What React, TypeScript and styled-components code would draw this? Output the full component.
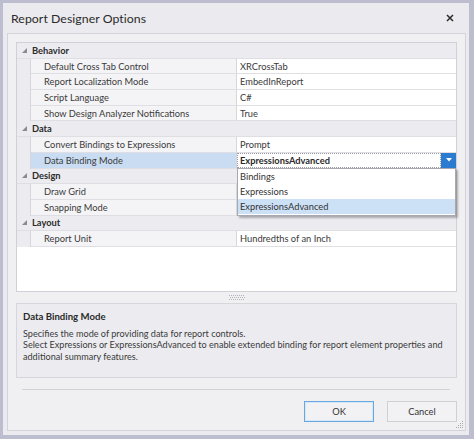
import React from "react";
import styled, { createGlobalStyle } from "styled-components";

const GlobalStyle = createGlobalStyle`
  html, body { margin: 0; padding: 0; background: #bdbdd0; }
  body { font-family: Lato, "Open Sans", sans-serif; color: #333; }
  * { box-sizing: border-box; }
`;

const FONT = `Lato, "Open Sans", sans-serif`;
const ROW_H = 15.7;

const Screen = styled.div`
  width: 474px;
  height: 439px;
  padding: 3px 5px 4px 3px;
  background: #bdbdd0;
  display: flex;
`;

const Window = styled.div`
  flex: 1;
  display: flex;
  flex-direction: column;
  background: #ebebef;
  padding: 0 3px 4px 4px;
`;

const TitleBar = styled.div`
  height: 30px;
  display: flex;
  align-items: center;
  justify-content: space-between;
  padding: 0 12px 0 4px;
`;

const Title = styled.div`
  font-family: ${FONT};
  font-size: 12.3px;
  color: #2a2a2a;
  letter-spacing: 0.05px;
`;

const Client = styled.div`
  position: relative;
  flex: 1;
  display: flex;
  flex-direction: column;
  border: 1px solid #d3d3d9;
  background: #f0f0f3;
  padding: 8px 8px 8px 8px;
`;

const Grid = styled.div`
  height: 250px;
  border: 1px solid #d0d0d7;
  background: #ffffff;
  display: flex;
  flex-direction: column;
`;

const CategoryRow = styled.div`
  height: ${ROW_H}px;
  display: grid;
  grid-template-columns: 14px 1fr;
  align-items: center;
  background: #ebebf0;
  border-bottom: 1px solid #dedee3;
`;

const Expander = styled.div`
  display: flex;
  justify-content: flex-end;
  padding-right: 4px;
`;

const CategoryText = styled.div`
  font-family: ${FONT};
  font-weight: 700;
  font-size: 9.3px;
  color: #2b2b2b;
  padding-left: 1px;
`;

const PropRow = styled.div`
  height: ${ROW_H}px;
  display: grid;
  grid-template-columns: 14px 206px 1fr;
`;

const Gutter = styled.div`
  background: #ebebf0;
  border-right: 1px solid #d6d6dc;
`;

const NameCell = styled.div<{ $selected?: boolean }>`
  display: flex;
  align-items: center;
  padding-left: 13px;
  font-family: ${FONT};
  font-size: 9.3px;
  color: #3a3a3a;
  background: ${(p) => (p.$selected ? "#c9dcf2" : "#f4f4f6")};
  border-right: 1px solid #d6d6dc;
  border-bottom: 1px solid #dedee3;
  white-space: nowrap;
`;

const ValueCell = styled.div`
  position: relative;
  display: flex;
  align-items: center;
  padding-left: 3px;
  font-family: ${FONT};
  font-size: 9.3px;
  color: #3a3a3a;
  background: #ffffff;
  border-bottom: 1px solid #dedee3;
  white-space: nowrap;
`;

const EditorCell = styled.div`
  position: relative;
  display: flex;
  align-items: stretch;
  background: #ffffff;
  border-bottom: 1px solid #dedee3;
`;

const EditorText = styled.div`
  flex: 1;
  display: flex;
  align-items: center;
  padding-left: 2px;
  border: 1px dotted #9a9aa4;
  font-family: ${FONT};
  font-weight: 700;
  font-size: 9.3px;
  color: #2a2a2a;
`;

const DropButton = styled.div`
  width: 15px;
  background: #2b7bd0;
  display: flex;
  align-items: center;
  justify-content: center;
`;

const Popup = styled.div`
  position: absolute;
  top: 100%;
  left: 0;
  right: 0;
  height: 48px;
  background: #ffffff;
  border: 1px solid #a8a8b0;
  box-shadow: 2px 2px 2px rgba(0, 0, 0, 0.28);
  display: flex;
  flex-direction: column;
  z-index: 5;
`;

const PopupItem = styled.div<{ $active?: boolean }>`
  flex: 1;
  display: flex;
  align-items: center;
  padding-left: 2px;
  font-family: ${FONT};
  font-size: 9.3px;
  color: #333;
  background: ${(p) => (p.$active ? "#cce0f6" : "transparent")};
`;

const Splitter = styled.div`
  height: 11px;
  display: flex;
  align-items: center;
  justify-content: center;
`;

const Description = styled.div`
  height: 75px;
  border: 1px solid #d6d6dc;
  background: #ececf0;
  padding: 6px 6px;
  display: flex;
  flex-direction: column;
`;

const DescTitle = styled.div`
  font-family: ${FONT};
  font-weight: 700;
  font-size: 9.6px;
  color: #2a2a2a;
  line-height: 13px;
  margin-bottom: 5px;
`;

const DescText = styled.div`
  font-family: ${FONT};
  font-size: 9.1px;
  line-height: 11.3px;
  color: #3a3a3a;
  white-space: nowrap;
`;

const Separator = styled.div`
  height: 1px;
  background: #d2d2d8;
  margin: 11px 7px 11px 6px;
`;

const ButtonRow = styled.div`
  display: flex;
  justify-content: flex-end;
  gap: 13px;
`;

const Button = styled.div<{ $focused?: boolean }>`
  width: 70px;
  height: 21px;
  display: flex;
  align-items: center;
  justify-content: center;
  font-family: ${FONT};
  font-size: 9.3px;
  color: #333;
  background: #f2f2f5;
  border: 1px solid ${(p) => (p.$focused ? "#6aa7df" : "#cfcfd5")};
  box-shadow: ${(p) => (p.$focused ? "inset 0 0 0 1px #d6e7f7" : "none")};
`;

const Grip = styled.svg`
  position: absolute;
  right: 1px;
  bottom: 1px;
`;

const Expand = () => (
  <svg width="5" height="5" viewBox="0 0 5 5">
    <polygon points="5,0 5,5 0,5" fill="#8a8a92" />
  </svg>
);

type Prop = { name: string; value: string; editor?: boolean };
type Cat = { title: string; props: Prop[] };

const data: Cat[] = [
  {
    title: "Behavior",
    props: [
      { name: "Default Cross Tab Control", value: "XRCrossTab" },
      { name: "Report Localization Mode", value: "EmbedInReport" },
      { name: "Script Language", value: "C#" },
      { name: "Show Design Analyzer Notifications", value: "True" },
    ],
  },
  {
    title: "Data",
    props: [
      { name: "Convert Bindings to Expressions", value: "Prompt" },
      { name: "Data Binding Mode", value: "ExpressionsAdvanced", editor: true },
    ],
  },
  {
    title: "Design",
    props: [
      { name: "Draw Grid", value: "" },
      { name: "Snapping Mode", value: "" },
    ],
  },
  {
    title: "Layout",
    props: [{ name: "Report Unit", value: "Hundredths of an Inch" }],
  },
];

export default function App() {
  return (
    <>
      <GlobalStyle />
      <Screen>
        <Window>
          <TitleBar>
            <Title>Report Designer Options</Title>
            <svg width="8" height="8" viewBox="0 0 8 8">
              <path d="M1 1 L7 7 M7 1 L1 7" stroke="#2a2a2a" strokeWidth="1.5" />
            </svg>
          </TitleBar>
          <Client>
            <Grid>
              {data.map((cat) => (
                <React.Fragment key={cat.title}>
                  <CategoryRow>
                    <Expander>
                      <Expand />
                    </Expander>
                    <CategoryText>{cat.title}</CategoryText>
                  </CategoryRow>
                  {cat.props.map((p) => (
                    <PropRow key={p.name}>
                      <Gutter />
                      <NameCell $selected={p.editor}>{p.name}</NameCell>
                      {p.editor ? (
                        <EditorCell>
                          <EditorText>{p.value}</EditorText>
                          <DropButton>
                            <svg width="6" height="4" viewBox="0 0 6 4">
                              <polygon points="0,0 6,0 3,3.5" fill="#ffffff" />
                            </svg>
                          </DropButton>
                          <Popup>
                            <PopupItem>Bindings</PopupItem>
                            <PopupItem>Expressions</PopupItem>
                            <PopupItem $active>ExpressionsAdvanced</PopupItem>
                          </Popup>
                        </EditorCell>
                      ) : (
                        <ValueCell>{p.value}</ValueCell>
                      )}
                    </PropRow>
                  ))}
                </React.Fragment>
              ))}
            </Grid>
            <Splitter>
              <svg width="16" height="5" viewBox="0 0 16 5">
                {[0, 2, 4, 6, 8, 10, 12, 14].map((x) => (
                  <rect key={"a" + x} x={x} y={0} width="1" height="1" fill="#b4b4bc" />
                ))}
                {[1, 3, 5, 7, 9, 11, 13, 15].map((x) => (
                  <rect key={"b" + x} x={x} y={2} width="1" height="1" fill="#b4b4bc" />
                ))}
                {[0, 2, 4, 6, 8, 10, 12, 14].map((x) => (
                  <rect key={"c" + x} x={x} y={4} width="1" height="1" fill="#b4b4bc" />
                ))}
              </svg>
            </Splitter>
            <Description>
              <DescTitle>Data Binding Mode</DescTitle>
              <DescText>
                Specifies the mode of providing data for report controls.
                <br />
                Select Expressions or ExpressionsAdvanced to enable extended binding for report element properties and
                <br />
                additional summary features.
              </DescText>
            </Description>
            <Separator />
            <ButtonRow>
              <Button $focused>OK</Button>
              <Button>Cancel</Button>
            </ButtonRow>
            <Grip width="8" height="8" viewBox="0 0 8 8">
              <rect x="6" y="0" width="1" height="1" fill="#a8a8b0" />
              <rect x="4" y="2" width="1" height="1" fill="#a8a8b0" />
              <rect x="6" y="2" width="1" height="1" fill="#a8a8b0" />
              <rect x="2" y="4" width="1" height="1" fill="#a8a8b0" />
              <rect x="4" y="4" width="1" height="1" fill="#a8a8b0" />
              <rect x="6" y="4" width="1" height="1" fill="#a8a8b0" />
              <rect x="0" y="6" width="1" height="1" fill="#a8a8b0" />
              <rect x="2" y="6" width="1" height="1" fill="#a8a8b0" />
              <rect x="4" y="6" width="1" height="1" fill="#a8a8b0" />
              <rect x="6" y="6" width="1" height="1" fill="#a8a8b0" />
            </Grip>
          </Client>
        </Window>
      </Screen>
    </>
  );
}
